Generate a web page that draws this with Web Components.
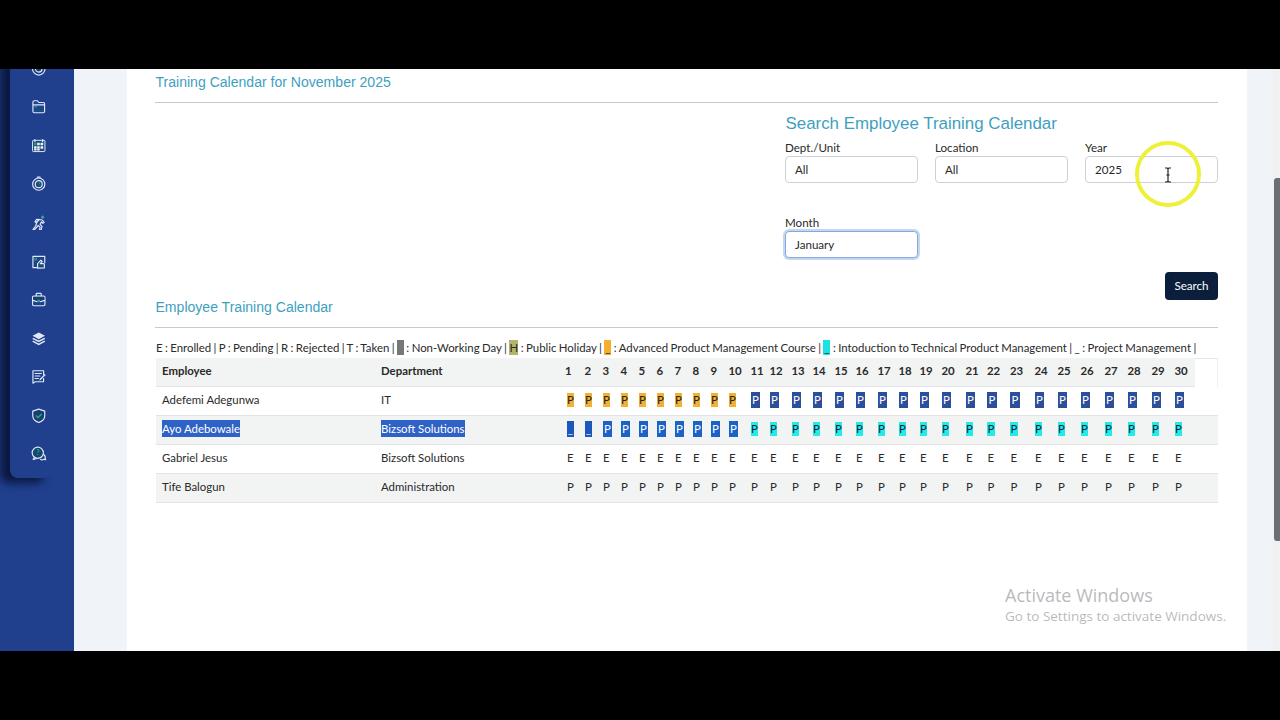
<!DOCTYPE html>
<html><head><meta charset="utf-8"><style>
html,body{margin:0;padding:0;height:720px;overflow:hidden;background:#000}
body{font-family:Lato,"Liberation Sans",sans-serif}
</style></head><body>
<app-frame>
  <side-rail slot="side"></side-rail>
  <content-card>
    <section-title>Training Calendar for November 2025</section-title>
    <search-panel></search-panel>
    <section-title>Employee Training Calendar</section-title>
    <calendar-legend></calendar-legend>
    <calendar-table></calendar-table>
  </content-card>
  <desktop-overlay slot="overlay"></desktop-overlay>
</app-frame>
<script>
const def=(name,css,html)=>{customElements.define(name,class extends HTMLElement{
  constructor(){super();this.attachShadow({mode:'open'}).innerHTML=`<style>${css}</style>`+html}
})};

def('app-frame',`
:host{display:flex;flex-direction:column;width:1280px;height:720px;background:#000}
.bar{height:69px;background:#000;flex:none}
.view{height:582px;flex:none;display:flex;background:#f0f4f8;overflow:hidden;position:relative}
.side{width:74px;flex:none;background:#203f8d;overflow:hidden}
.gutter-l{width:53px;flex:none}.gutter-r{width:26px;flex:none}
.track{width:7px;flex:none;background:#f1f1f1;padding-top:109px;box-sizing:border-box}
.thumb{height:363px;margin-left:1px;background:#6a6e75;border-radius:3px 0 0 3px}
`,`<div class="bar"></div><div class="view">
<div class="side"><slot name="side"></slot></div>
<div class="gutter-l"></div><slot></slot><div class="gutter-r"></div>
<div class="track"><div class="thumb"></div></div>
<slot name="overlay"></slot>
</div><div class="bar"></div>`);

const S='fill="none" stroke="#dfe9f7" stroke-width="1.2" stroke-linejoin="round" stroke-linecap="round"';
const ICONS={
top:`<circle cx="8" cy="8" r="6.5" ${S}/><circle cx="8" cy="8" r="3.4" fill="#173a6e" ${S}/>`,
folder:`<path d="M2 3.2q0-1.4 1.4-1.4h3.2l1.4 1.8h4.6q1.4 0 1.4 1.4v8q0 1.2-1.4 1.2H3.4Q2 14.2 2 13z" ${S}/><path d="M2.4 6h11.2" ${S}/><path d="M3.4 10h9.2v3H3.4z" fill="#17507a"/><path d="M3.4 7.2h3v1.4h-3z" fill="#2a8f78"/>`,
calendar:`<rect x="1.6" y="2.4" width="12.8" height="11.6" rx=".8" fill="#1b4a78" stroke="#dfe9f7" stroke-width="1"/><path d="M4 1.2v3M12 1.2v3" stroke="#dfe9f7" stroke-width="1.2"/><path d="M6.4 5h2.6v2.6H6.4zM9.8 5h2.8v2.6H9.8zM3.2 8.4h2.6V11H3.2zM6.4 8.4h2.6V11H6.4zM9.8 8.4h2.8V11H9.8zM6.4 11.4h2.6V13H6.4zM3.2 11.4h2.6V13H3.2z" fill="#f2f6fc"/><path d="M3.2 4.6h2.6v3H3.2z" fill="#2a9a7c"/>`,
target:`<circle cx="8" cy="8.4" r="6.3" ${S}/><circle cx="8" cy="8.4" r="3.6" fill="#1b4a78" ${S}/><path d="M6.6 1.2h2.8" ${S}/><path d="M8 8.4l1.6-1.6" stroke="#2a8f78" stroke-width="1.2"/>`,
runner:`<circle cx="12" cy="2.2" r="1.6" fill="#2fa584"/><path d="M2 15l2.8-3.4 1-3.6 2.8-3.4 3 .6 2 2.4-1.4 1-1.4-1.6-1.4 2.6 2 2.2-1 3.6-1.6-.4.6-2.6-2.2-1.6-.8 1.4-2.8 3z" ${S}/><path d="M8.6 4.6L5.8 4.4 4 7l1.2.8 1.4-1.8" ${S}/>`,
board:`<path d="M6 14H2V2.4h12.2V9" ${S}/><path d="M3.4 3.8h3v3h-3z" fill="#2a8f78"/><path d="M6.8 14.6V10l3.4-3.6 1.4 1.2-2 2.4h3.2q1 0 1 1v3.4z" fill="#1b4a78" ${S}/>`,
brief:`<rect x="1.6" y="4.2" width="12.8" height="10" rx="1.2" ${S}/><path d="M5.4 4V2.2q0-.7.7-.7h3.8q.7 0 .7.7V4" ${S}/><path d="M2.2 4.8h11.6v3.4l-4.2 1.3H6.4L2.2 8.2z" fill="#173e70"/><path d="M2 8.6l4.4 1.4M14 8.6L9.6 10" ${S}/><rect x="6.6" y="8" width="2.8" height="2.4" fill="#2fa584"/>`,
layers:`<path d="M8 1.6l6.4 3.4L8 8.4 1.6 5z" fill="#dfe9f7"/><path d="M1.8 7.6L8 10.8l6.2-3.2" fill="none" stroke="#dfe9f7" stroke-width="1.6"/><path d="M1.8 10.4L8 13.8l6.2-3.4" fill="none" stroke="#dfe9f7" stroke-width="1.6"/>`,
note:`<path d="M13 6V1.8H2v12.8l2.4-1.4H13V10" ${S}/><path d="M4.2 4.6h6.4M4.2 7.2h5M4.2 9.8h3.4" ${S}/><path d="M9 10.4l5.2-5.2 1 1-5.2 5.2-1.4.4z" fill="#dfe9f7"/>`,
shield:`<path d="M8 1.2l6.2 2v4.6c0 3.6-2.6 6-6.2 7.2-3.6-1.2-6.2-3.6-6.2-7.2V3.2z" fill="#173e70" ${S}/><path d="M5 7.8l2.2 2.2L11 6.2" fill="none" stroke="#2fa584" stroke-width="1.5"/>`,
chat:`<circle cx="7" cy="7" r="5.8" fill="#154a70" ${S}/><path d="M3.5 12l-1.3 1.8 3-.6" ${S}/><path d="M12.8 8.6q2.4 1.6 1.8 4l.6 1.6-2-.4q-1.6 1-3.4.2" ${S}/><text x="7" y="9.6" font-size="7.4" font-family="Lato" font-weight="700" text-anchor="middle" fill="#2fa584">?</text>`
};
def('side-rail',`
:host{display:block;width:44px;margin:-20px 0 0 10px;padding-bottom:4.4px;background:#203f8d;border-radius:0 0 8px 8px;box-shadow:-10px 5px 9px rgba(6,16,48,.82)}
.i{height:38.6px;display:flex;align-items:center;justify-content:center;padding-left:14px;box-sizing:border-box;width:44px}
.i svg{width:15.5px;height:15.5px;display:block}
`,Object.keys(ICONS).map(k=>`<div class="i"><svg viewBox="0 0 16 16">${ICONS[k]}</svg></div>`).join(''));

def('content-card',`
:host{display:block;width:1120px;flex:none;background:#fff;box-sizing:border-box;padding:0 29px 0 28px;height:582px}
`,`<slot></slot>`);

def('section-title',`
:host{display:block;font-family:"Liberation Sans",Arial,sans-serif;font-size:14.05px;line-height:18px;color:#409fc0;padding:4px 0 11px .5px;border-bottom:1px solid #c9c9c9}
`,`<slot></slot>`);

const field=(l,v,f)=>`<div class="f"><div class="l">${l}</div><div class="v${f?' foc':''}">${v}</div></div>`;
def('search-panel',`
:host{display:block;padding:11px 0 0 630px;height:191px;box-sizing:border-box;color:#2a2a2a;font-size:11.6px}
h2{font:400 16.9px/20px "Liberation Sans",Arial,sans-serif;color:#409fc0;margin:0 0 5px;padding-left:.5px}
.g{display:grid;grid-template-columns:repeat(3,133px);column-gap:17px;row-gap:31px}
.l{line-height:17px;height:17px}
.v{height:27px;box-sizing:border-box;border:1px solid #cdd1d6;border-radius:4px;padding:0 9px;line-height:25px;background:#fff}
.foc{border-color:#86a9dd;box-shadow:0 0 0 2px #c6d8f1}
.b{display:flex;justify-content:flex-end;margin-top:14px}
.btn{width:53px;height:28px;background:#0b1f3d;color:#fff;border-radius:4px;text-align:center;line-height:28px}
`,`<h2>Search Employee Training Calendar</h2><div class="g">${field('Dept./Unit','All')}${field('Location','All')}${field('Year','2025')}${field('Month','January',1)}</div><div class="b"><div class="btn">Search</div></div>`);

def('calendar-legend',`
:host{display:block;font-size:11.4px;line-height:16px;color:#2a2a2a;white-space:nowrap;padding:12px 0 2px 1px;height:30px;box-sizing:border-box;word-spacing:-.5px}
.k{display:inline-block;width:7px;height:15px;line-height:15px;text-align:center;vertical-align:top;overflow:hidden;word-spacing:0}
`,`E : Enrolled | P : Pending | R : Rejected | T : Taken | <span class="k" style="background:#777">&nbsp;</span> : Non-Working Day | <span class="k" style="background:#b3b36b;width:9px">H</span> : Public Holiday | <span class="k" style="background:#f5ad2e">_</span> : Advanced Product Management Course | <span class="k" style="background:#19e3e3">_</span> : Intoduction to Technical Product Management | _ : Project Management |`);

const W=[18,18,18,18,18,18,18,18,18,22,19,22,21,22,21,22,21,21,22,24,21.5,23,24.5,23,23,24,23,24,23,26];
const cols='219px 185px '+W.map(w=>w+'px').join(' ');
const rowsData=[
 ['Adefemi Adegunwa','IT',d=>d<=10?['P','o']:['P','n'],0],
 ['Ayo Adebowale','Bizsoft Solutions',d=>d<=2?['_','u']:d<=10?['P','s']:['P','y'],1],
 ['Gabriel Jesus','Bizsoft Solutions',d=>['E',''],0],
 ['Tife Balogun','Administration',d=>['P',''],0]];
const days=[...Array(30).keys()].map(i=>i+1);
def('calendar-table',`
:host{display:block;font-size:11.4px;color:#2a2a2a;margin-left:1px;box-shadow:inset 0 1px #e6e8ea, inset -1px 0 #eceef0}
.r{display:grid;grid-template-columns:${cols};height:29px;align-items:center;border-bottom:1px solid #e2e4e6;box-sizing:border-box;padding-bottom:3px}
.h{width:1039px;font-weight:700;background:#f2f3f3}
.c{padding-left:6px;white-space:nowrap}
.d{padding-left:6.6px;line-height:15px}
.h .d{padding-left:6.5px}.h .d:nth-child(3){padding-left:5px}
.d span{display:block;width:7.5px;text-align:center;height:14px;line-height:14px}
.o{background:#f2b134;color:#222}
.n{background:#2c4f9c;color:#fff;width:9.5px!important;height:16px!important;line-height:16px!important}
.s{background:#1a62c8;color:#fff;width:9.5px!important;height:16px!important;line-height:16px!important}
.u{background:#1a58bb;color:#dfe9f7;height:16px!important;line-height:16px!important}
.y{background:#25ebe4;color:#124}
.sel{background:#2f62c6;color:#fff;padding:2px 0}
`,`<div class="r h"><div class="c">Employee</div><div class="c">Department</div>${days.map(d=>`<div class="d">${d}</div>`).join('')}</div>`+
rowsData.map((r,i)=>`<div class="r" style="background:${i%2?'#f2f3f3':'#fff'}"><div class="c">${r[3]?`<span class="sel">${r[0]}</span>`:r[0]}</div><div class="c">${r[3]?`<span class="sel">${r[1]}</span>`:r[1]}</div>${days.map(d=>{const [t,k]=r[2](d);return `<div class="d">${k?`<span class="${k}">${t}</span>`:`<span>${t}</span>`}</div>`}).join('')}</div>`).join(''));

def('desktop-overlay',`
:host{display:block;position:absolute;inset:0;pointer-events:none;font-family:"Open Sans","Liberation Sans",sans-serif}
.a{position:absolute;left:1005px;top:515px;font-size:18px;line-height:22px;color:rgba(110,115,120,.5);white-space:nowrap}
.b{position:absolute;left:1005px;top:538px;font-size:13.5px;line-height:18px;color:rgba(110,115,120,.5);white-space:nowrap}
.ring{position:absolute;left:1135px;top:72px;width:66px;height:66px;box-sizing:border-box;border-radius:50%;border:4px solid #eef03a}
svg{position:absolute;left:1163px;top:98px}
`,`<div class="a">Activate Windows</div><div class="b">Go to Settings to activate Windows.</div><div class="ring"></div>
<svg width="10" height="16" viewBox="0 0 10 16"><path d="M2 1h2.2L5 2l.8-1H8M5 2v12M2 15h2.2L5 14l.8 1H8M3.4 8h3.2" fill="none" stroke="#222" stroke-width="1.2"/></svg>`);
</script>
</body></html>
